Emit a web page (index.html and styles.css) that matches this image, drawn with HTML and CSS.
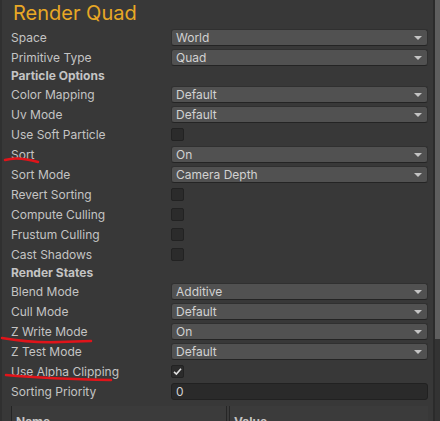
FILE: index.html
```html
<!DOCTYPE html>
<html lang="en">
<head>
    <meta charset="UTF-8">
    <meta name="viewport" content="width=device-width, initial-scale=1.0">
    <title>Render Quad</title>
    <link rel="stylesheet" href="styles.css">
</head>
<body>
    <div class="inspector">
        <div class="panel">
            <h1 class="title">Render Quad</h1>

            <div class="row"><span class="label">Space</span><div class="dropdown">World</div></div>
            <div class="row"><span class="label">Primitive Type</span><div class="dropdown">Quad</div></div>

            <div class="header">Particle Options</div>
            <div class="row"><span class="label">Color Mapping</span><div class="dropdown">Default</div></div>
            <div class="row"><span class="label">Uv Mode</span><div class="dropdown">Default</div></div>
            <div class="row"><span class="label">Use Soft Particle</span><div class="checkbox"></div></div>
            <div class="row"><span class="label">Sort</span><div class="dropdown">On</div></div>
            <div class="row"><span class="label">Sort Mode</span><div class="dropdown">Camera Depth</div></div>
            <div class="row"><span class="label">Revert Sorting</span><div class="checkbox"></div></div>
            <div class="row"><span class="label">Compute Culling</span><div class="checkbox"></div></div>
            <div class="row"><span class="label">Frustum Culling</span><div class="checkbox"></div></div>
            <div class="row"><span class="label">Cast Shadows</span><div class="checkbox"></div></div>

            <div class="header">Render States</div>
            <div class="row"><span class="label">Blend Mode</span><div class="dropdown">Additive</div></div>
            <div class="row"><span class="label">Cull Mode</span><div class="dropdown">Default</div></div>
            <div class="row"><span class="label">Z Write Mode</span><div class="dropdown">On</div></div>
            <div class="row"><span class="label">Z Test Mode</span><div class="dropdown">Default</div></div>
            <div class="row">
                <span class="label">Use Alpha Clipping</span>
                <div class="checkbox checked">
                    <svg viewBox="0 0 13 13" width="13" height="13"><path d="M3 6.8 L5.4 9 L10 3.8" fill="none" stroke="#e0e0e0" stroke-width="1.6"/></svg>
                </div>
            </div>
            <div class="row"><span class="label">Sorting Priority</span><div class="number">0</div></div>

            <div class="list-header">
                <div class="col">Name</div>
                <div class="col value">Value</div>
            </div>

            <!-- hand-drawn red marks over the labels -->
            <svg class="marks" width="433" height="421" viewBox="0 0 433 421">
                <path d="M5 160 Q18 156 38 162" />
                <path d="M2 338 Q30 343 60 342 T91 341" />
                <path d="M6 375 Q50 379 111 380" />
            </svg>
        </div>
        <div class="scrollbar"><div class="thumb"></div></div>
    </div>
</body>
</html>
```

FILE: styles.css
```css
body {
    margin: 0;
    background: #383838;
    font-family: 'Inter', 'Noto Sans', sans-serif;
    font-size: 12px;
    color: #c4c4c4;
    overflow: hidden;
}

.inspector {
    display: flex;
    width: 440px;
    height: 421px;
    overflow: hidden;
}

.panel {
    position: relative;
    flex: 1;
    padding: 0 5px 0 9px;
    border-left: 2px solid #303030;
    box-sizing: border-box;
}

.title {
    margin: 0 0 0 2px;
    height: 27px;
    line-height: 26px;
    font-size: 20px;
    font-weight: 400;
    color: #e8a825;
}

.row {
    display: grid;
    grid-template-columns: 160px 1fr;
    align-items: center;
    height: 20px;
}

.label {
    white-space: nowrap;
}

.header {
    height: 17px;
    line-height: 17px;
    font-weight: 700;
}

.dropdown,
.number {
    position: relative;
    height: 17px;
    line-height: 16px;
    padding-left: 4px;
    box-sizing: border-box;
    border-radius: 3px;
    color: #d2d2d2;
}

.dropdown {
    background: #515151;
    border: 1px solid #303030;
    border-bottom-color: #242424;
}

.dropdown::after {
    content: "";
    position: absolute;
    right: 5px;
    top: 6px;
    border-left: 4px solid transparent;
    border-right: 4px solid transparent;
    border-top: 4px solid #c4c4c4;
}

.number {
    background: #2a2a2a;
    border: 1px solid #212121;
}

.checkbox {
    width: 13px;
    height: 13px;
    box-sizing: border-box;
    background: #2b2b2b;
    border: 1px solid #222;
    border-radius: 2px;
}

.checkbox svg {
    display: block;
    margin: -1px;
}

.list-header {
    display: flex;
    margin: 5px 0 0 0;
    height: 30px;
    background: #3b3b3b;
    border-left: 1px solid #242424;
    font-weight: 700;
}

.list-header .col {
    width: 210px;
    padding: 8px 0 0 4px;
    border-right: 1px solid #262626;
}

.list-header .value {
    flex: 1;
    width: auto;
    border-right: none;
    border-left: 1px solid #262626;
    margin-left: 2px;
}

.marks {
    position: absolute;
    left: -2px;
    top: 0;
    pointer-events: none;
}

.marks path {
    fill: none;
    stroke: #e0141a;
    stroke-width: 2.5;
    stroke-linecap: round;
}

.scrollbar {
    width: 5px;
    border-left: 2px solid #2b2b2b;
    background: #333;
}

.thumb {
    height: 339px;
    background: #5e5e5e;
}
```
